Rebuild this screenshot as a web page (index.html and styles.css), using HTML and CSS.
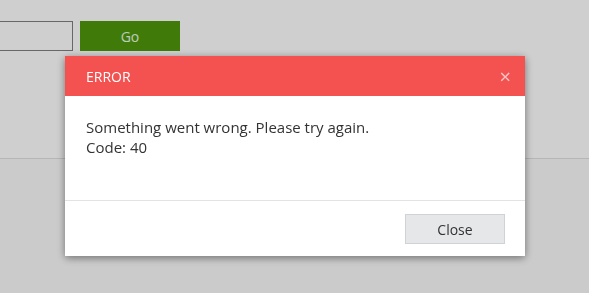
FILE: index.html
```html
<!DOCTYPE html>
<html lang="en">
<head>
    <meta charset="UTF-8">
    <meta name="viewport" content="width=device-width, initial-scale=1.0">
    <title>Error</title>
    <link rel="stylesheet" href="styles.css">
</head>
<body>
    <div class="page">
        <div class="search-row">
            <input type="text" class="search-input">
            <button class="go-button">Go</button>
        </div>
    </div>

    <!-- Error dialog -->
    <div class="overlay"></div>
    <div class="modal">
        <div class="modal-header">
            <span class="modal-title">ERROR</span>
            <span class="close">&times;</span>
        </div>
        <div class="modal-body">
            <p>Something went wrong. Please try again.</p>
            <p>Code: 40</p>
        </div>
        <div class="modal-footer">
            <button class="close-button">Close</button>
        </div>
    </div>
</body>
</html>
```

FILE: styles.css
```css
body {
    margin: 0;
    font-family: "Open Sans", Arial, sans-serif;
    background-color: #fbfbfb;
    height: 293px;
}

.page {
    height: 159px;
    background-color: #ffffff;
    border-bottom: 1px solid #e0e0e0;
    box-sizing: border-box;
}

.search-row {
    display: flex;
    gap: 7px;
    padding-top: 21px;
    margin-left: -30px;
}

.search-input {
    width: 103px;
    height: 30px;
    border: 1px solid #7f7f7f;
    box-sizing: border-box;
    background: #fff;
}

.go-button {
    width: 100px;
    height: 30px;
    border: none;
    background-color: #4f980d;
    color: #e8fbe6;
    font-family: inherit;
    font-size: 14px;
}

/* Modal styles */
.overlay {
    position: fixed;
    inset: 0;
    background-color: rgba(0, 0, 0, 0.19);
}

.modal {
    position: fixed;
    top: 56px;
    left: 65px;
    width: 460px;
    background-color: #fff;
    box-shadow: 0 2px 8px rgba(0, 0, 0, 0.45);
}

.modal-header {
    height: 40px;
    background-color: #f45151;
    display: flex;
    align-items: center;
    justify-content: space-between;
    padding: 0 14px 0 21px;
    color: #fff;
}

.modal-title {
    font-size: 14px;
}

.close {
    font-size: 20px;
    color: #f9c6c6;
    line-height: 1;
    margin-top: 1px;
}

.modal-body {
    padding: 21px 21px 25px;
    height: 104px;
    box-sizing: border-box;
    color: #333;
    font-size: 15px;
}

.modal-body p {
    margin: 0;
    line-height: 20px;
}

.modal-footer {
    border-top: 1px solid #e3e3e3;
    display: flex;
    justify-content: flex-end;
    padding: 13px 20px 12px;
}

.close-button {
    width: 100px;
    height: 30px;
    background-color: #e6e7e9;
    border: 1px solid #cfd2d6;
    color: #333;
    font-family: inherit;
    font-size: 14px;
}
```
